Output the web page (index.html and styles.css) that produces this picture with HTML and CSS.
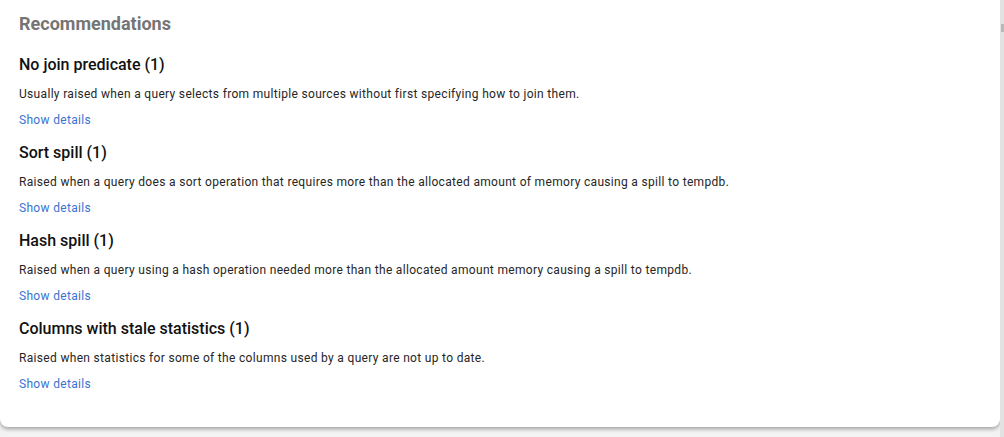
FILE: index.html
```html
<!DOCTYPE html>
<html>
<head>
<meta charset="utf-8">
<link rel="stylesheet" href="styles.css">
</head>
<body>
<div class="page">
  <div class="card">
    <h1 class="title">Recommendations</h1>
    <section class="rec">
      <h2 class="rec-name">No join predicate (1)</h2>
      <p class="rec-desc">Usually raised when a query selects from multiple sources without first specifying how to join them.</p>
      <a class="rec-link" href="#">Show details</a>
    </section>
    <section class="rec">
      <h2 class="rec-name">Sort spill (1)</h2>
      <p class="rec-desc">Raised when a query does a sort operation that requires more than the allocated amount of memory causing a spill to tempdb.</p>
      <a class="rec-link" href="#">Show details</a>
    </section>
    <section class="rec">
      <h2 class="rec-name">Hash spill (1)</h2>
      <p class="rec-desc">Raised when a query using a hash operation needed more than the allocated amount memory causing a spill to tempdb.</p>
      <a class="rec-link" href="#">Show details</a>
    </section>
    <section class="rec">
      <h2 class="rec-name">Columns with stale statistics (1)</h2>
      <p class="rec-desc">Raised when statistics for some of the columns used by a query are not up to date.</p>
      <a class="rec-link" href="#">Show details</a>
    </section>
  </div>
  <div class="scroll"><div class="scroll-mark"></div></div>
</div>
</body>
</html>
```

FILE: styles.css
```css
html, body {
  margin: 0;
  padding: 0;
  background: #f3f3f3;
  font-family: Roboto, "Liberation Sans", Arial, sans-serif;
}
.page {
  display: flex;
  width: 1004px;
  height: 437px;
  overflow: hidden;
}
.card {
  width: 1000px;
  height: 427px;
  box-sizing: border-box;
  background: #ffffff;
  border-radius: 0 0 8px 8px;
  box-shadow: 0 2px 4px rgba(0,0,0,0.35);
  padding: 12px 19px 0 19px;
  flex: none;
}
.scroll {
  width: 4px;
  height: 437px;
  background: #e2e2e2;
  flex: none;
}
.scroll-mark {
  margin-top: 24px;
  margin-left: 1px;
  width: 3px;
  height: 8px;
  background: #b8b8b8;
}
.title {
  margin: 0 0 17px 0;
  font-size: 18px;
  line-height: 24px;
  font-weight: 700;
  color: #757575;
}
.rec {
  display: flex;
  flex-direction: column;
  align-items: flex-start;
  margin-bottom: 13px;
}
.rec-name {
  margin: 0 0 9px 0;
  font-size: 16px;
  line-height: 24px;
  font-weight: 500;
  color: #111111;
}
.rec-desc {
  margin: 0 0 10px 0;
  font-size: 12px;
  line-height: 16px;
  letter-spacing: 0.32px;
  color: #262626;
}
.rec-link {
  font-size: 12px;
  line-height: 16px;
  letter-spacing: 0.32px;
  color: #3a73d1;
  text-decoration: none;
}
```
